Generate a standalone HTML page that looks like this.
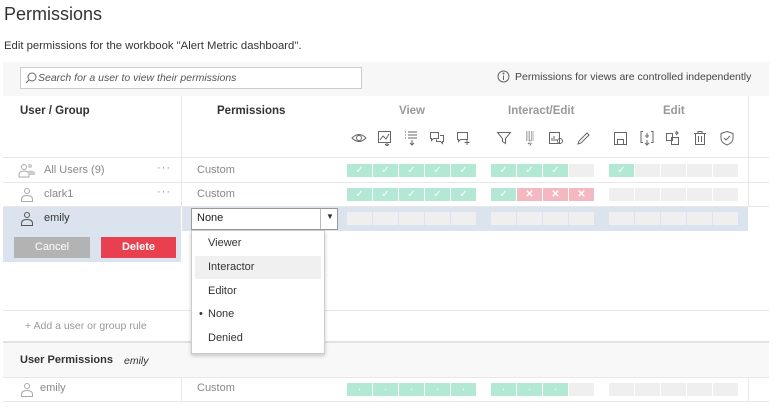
<!DOCTYPE html>
<html><head><meta charset="utf-8"><style>
*{margin:0;padding:0;box-sizing:border-box}
body{width:781px;height:416px;background:#fff;font-family:"Liberation Sans",sans-serif;color:#333;position:relative;overflow:hidden}
.a{position:absolute}
.t{font-size:11px}
.g{color:#888}
.row{position:absolute;display:flex;gap:1px;height:13px}
.row div{width:25px;height:13px;background:#efefef;color:#fff;font-size:10px;text-align:center;line-height:13px}
.row .y{background:#b3e8d5}
.row .n{background:#f4b8c0;font-weight:bold}
.hl{position:absolute;height:1px;background:#e8e8e8}
.ic{position:absolute;top:130px;width:16px;height:16px}
svg{stroke:#666;fill:none;stroke-width:1}
.h{font-size:11.5px;font-weight:bold}
</style></head><body>
<div class="a" style="left:4px;top:4px;font-size:18px;color:#333">Permissions</div>
<div class="a" style="left:4px;top:40px;font-size:11.3px;color:#333">Edit permissions for the workbook "Alert Metric dashboard".</div>

<div class="a" style="left:3px;top:62px;width:766px;height:34px;background:#f7f7f7"></div>
<div class="a" style="left:20px;top:67px;width:342px;height:22px;background:#fff;border:1px solid #ccc"></div>
<svg class="a" style="left:25px;top:72px" width="12" height="12"><circle cx="7" cy="5" r="4"/><line x1="4" y1="8" x2="1" y2="11"/></svg>
<div class="a" style="left:38px;top:72px;font-size:10.5px;font-style:italic;color:#555">Search for a user to view their permissions</div>
<svg class="a" style="left:497px;top:70px" width="13" height="13"><circle cx="6.5" cy="6.5" r="5.5"/><line x1="6.5" y1="5.5" x2="6.5" y2="10"/><circle cx="6.5" cy="3.5" r=".5"/></svg>
<div class="a" style="left:515px;top:71px;font-size:10.5px;color:#444">Permissions for views are controlled independently</div>

<div class="a" style="left:181px;top:96px;width:1px;height:111px;background:#e8e8e8"></div>
<div class="a" style="left:748px;top:96px;width:1px;height:111px;background:#e8e8e8"></div>
<div class="a h" style="left:20px;top:105px;color:#333">User / Group</div>
<div class="a h" style="left:217px;top:105px;color:#333">Permissions</div>
<div class="a h" style="left:399px;top:105px;color:#999">View</div>
<div class="a h" style="left:508px;top:105px;color:#999">Interact/Edit</div>
<div class="a h" style="left:663px;top:105px;color:#999">Edit</div>

<svg class="ic" style="left:351px"><path d="M1 8Q8 1 15 8Q8 15 1 8Z"/><circle cx="8" cy="8" r="2.5"/></svg>
<svg class="ic" style="left:377px"><rect x="1.5" y="1.5" width="12" height="11"/><path d="M3 10l3-4 3 3 3-5M10 12v4M8 14l2 2 2-2"/></svg>
<svg class="ic" style="left:403px"><path d="M2 2h1M5 2h9M2 5h1M5 5h9M2 8h1M5 8h9M9 10v5M7 13l2 2 2-2"/></svg>
<svg class="ic" style="left:429px"><path d="M1.5 2.5h8v6h-5l-2 2v-2h-1zM11 5.5h3.5v6h-1v2l-2-2h-4v-2"/></svg>
<svg class="ic" style="left:456px"><path d="M1.5 2.5h10v7h-7l-2 2v-2h-1zM11 10v5M8.5 12.5h5"/></svg>
<svg class="ic" style="left:496px"><path d="M1.5 2.5h13l-5 6v5l-3-2v-3z"/></svg>
<svg class="ic" style="left:522px"><path d="M4 2h8M4 4h8M4 6h8M4 8h8M4 10h8M8 10v5M6 13l2 2 2-2" stroke-dasharray="1.5 1"/></svg>
<svg class="ic" style="left:548px"><rect x="1.5" y="2.5" width="10" height="11"/><path d="M4 11V8M6 11V6M8 11V9"/><circle cx="12" cy="11" r="2.5"/></svg>
<svg class="ic" style="left:575px"><path d="M3 14l1-3 8-8 2 2-8 8z"/></svg>
<svg class="ic" style="left:613px"><rect x="1.5" y="2.5" width="12" height="12"/><rect x="4.5" y="9.5" width="6" height="5"/></svg>
<svg class="ic" style="left:639px"><path d="M4 1.5h-2v11h2M12 1.5h2v11h-2M8 3v5M6 6h4M8 10v5M6 13l2 2 2-2"/></svg>
<svg class="ic" style="left:665px"><path d="M1.5 3.5h6v7h-6zM6.5 7.5h7v7h-7zM11 1l2 2-2 2M13 3h-3"/></svg>
<svg class="ic" style="left:692px"><path d="M2 3.5h12M6 3.5v-2h4v2M3.5 3.5v11h9v-11M6.5 6v6M9.5 6v6"/></svg>
<svg class="ic" style="left:719px"><path d="M8 1.5l6 2v5q0 4-6 6.5q-6-2.5-6-6.5v-5z"/><path d="M5 8l2 2 4-4"/></svg>

<div class="hl" style="left:3px;top:157px;width:766px"></div>
<div class="hl" style="left:3px;top:182px;width:766px"></div>
<div class="hl" style="left:3px;top:206px;width:766px"></div>

<svg class="a" style="left:18px;top:163px" width="18" height="16"><circle cx="6" cy="4" r="2.5" stroke="#aaa"/><path d="M1 14v-2q0-4 5-4t5 4v2z" stroke="#aaa"/><circle cx="12" cy="3" r="2" fill="#ccc" stroke="none"/><path d="M10 12v-4q2-1 5 0t2 4z" fill="#ccc" stroke="none"/></svg>
<div class="a t g" style="left:44px;top:164px">All Users (9)</div>
<div class="a g" style="left:157px;top:162px;font-size:11px;letter-spacing:1px">···</div>
<div class="a t g" style="left:197px;top:164px">Custom</div>
<div class="row" style="left:347px;top:164px"><div class="y">✓</div><div class="y">✓</div><div class="y">✓</div><div class="y">✓</div><div class="y">✓</div></div>
<div class="row" style="left:491px;top:164px"><div class="y">✓</div><div class="y">✓</div><div class="y">✓</div><div></div></div>
<div class="row" style="left:609px;top:164px"><div class="y">✓</div><div></div><div></div><div></div><div></div></div>

<svg class="a" style="left:20px;top:187px" width="14" height="16"><circle cx="7" cy="4" r="2.5" stroke="#aaa"/><path d="M1.5 14.5v-2q0-4 5.5-4t5.5 4v2z" stroke="#aaa"/></svg>
<div class="a t g" style="left:44px;top:188px">clark1</div>
<div class="a g" style="left:157px;top:186px;font-size:11px;letter-spacing:1px">···</div>
<div class="a t g" style="left:197px;top:188px">Custom</div>
<div class="row" style="left:347px;top:188px"><div class="y">✓</div><div class="y">✓</div><div class="y">✓</div><div class="y">✓</div><div class="y">✓</div></div>
<div class="row" style="left:491px;top:188px"><div class="y">✓</div><div class="n">✕</div><div class="n">✕</div><div class="n">✕</div></div>
<div class="row" style="left:609px;top:188px"><div></div><div></div><div></div><div></div><div></div></div>

<div class="a" style="left:3px;top:207px;width:178px;height:55px;background:#dbe4ee"></div>
<div class="a" style="left:182px;top:207px;width:566px;height:24px;background:#dbe4ee"></div>
<svg class="a" style="left:20px;top:211px" width="14" height="16"><circle cx="7" cy="4" r="2.5" stroke="#555"/><path d="M1.5 14.5v-2q0-4 5.5-4t5.5 4v2z" stroke="#555"/></svg>
<div class="a t" style="left:44px;top:212px;color:#333">emily</div>
<div class="row" style="left:347px;top:212px"><div></div><div></div><div></div><div></div><div></div></div>
<div class="row" style="left:491px;top:212px"><div></div><div></div><div></div><div></div></div>
<div class="row" style="left:609px;top:212px"><div></div><div></div><div></div><div></div><div></div></div>
<div class="a" style="left:14px;top:237px;width:76px;height:21px;background:#b3b3b3;color:#fff;font-size:11px;text-align:center;line-height:21px">Cancel</div>
<div class="a" style="left:101px;top:237px;width:75px;height:21px;background:#e8404f;color:#fff;font-size:11px;font-weight:bold;text-align:center;line-height:21px">Delete</div>

<div class="a" style="left:191px;top:208px;width:147px;height:22px;background:#fff;border:1px solid #999"></div>
<div class="a" style="left:320px;top:209px;width:1px;height:20px;background:#bbb"></div>
<div class="a t" style="left:197px;top:212px;color:#222">None</div>
<div class="a" style="left:326px;top:212px;font-size:8px;color:#333">▼</div>

<div class="hl" style="left:3px;top:310px;width:766px"></div>
<div class="a" style="left:25px;top:320px;font-size:10.5px;color:#999">+ Add a user or group rule</div>
<div class="a" style="left:3px;top:341px;width:766px;height:36px;background:#f8f8f8;border-top:2px solid #e2e2e2"></div>
<div class="a h" style="left:20px;top:354px;color:#333;font-weight:bold;font-size:11px">User Permissions</div>
<div class="a" style="left:124px;top:355px;font-size:10.5px;font-style:italic;color:#333">emily</div>
<div class="hl" style="left:3px;top:377px;width:766px"></div>
<div class="a" style="left:181px;top:378px;width:1px;height:23px;background:#e8e8e8"></div>
<div class="a" style="left:748px;top:378px;width:1px;height:23px;background:#e8e8e8"></div>
<svg class="a" style="left:20px;top:382px" width="14" height="16"><circle cx="7" cy="4" r="2.5" stroke="#aaa"/><path d="M1.5 14.5v-2q0-4 5.5-4t5.5 4v2z" stroke="#aaa"/></svg>
<div class="a t g" style="left:40px;top:382px">emily</div>
<div class="a t g" style="left:197px;top:382px">Custom</div>
<div class="row" style="left:347px;top:383px"><div class="y">·</div><div class="y">·</div><div class="y">·</div><div class="y">·</div><div class="y">·</div></div>
<div class="row" style="left:491px;top:383px"><div class="y">·</div><div class="y">·</div><div class="y">·</div><div></div></div>
<div class="row" style="left:609px;top:383px"><div></div><div></div><div></div><div></div><div></div></div>
<div class="hl" style="left:3px;top:401px;width:766px"></div>

<div class="a" style="left:191px;top:230px;width:134px;height:124px;background:#fff;border:1px solid #ccc;box-shadow:0 2px 4px rgba(0,0,0,.2)"></div>
<div class="a" style="left:195px;top:256px;width:126px;height:23px;background:#f0f0f0"></div>
<div class="a t" style="left:208px;top:237px;color:#333">Viewer</div>
<div class="a t" style="left:208px;top:261px;color:#333">Interactor</div>
<div class="a t" style="left:208px;top:285px;color:#333">Editor</div>
<div class="a t" style="left:199px;top:308px;color:#333">•</div>
<div class="a t" style="left:208px;top:308px;color:#333">None</div>
<div class="a t" style="left:208px;top:332px;color:#333">Denied</div>
</body></html>
